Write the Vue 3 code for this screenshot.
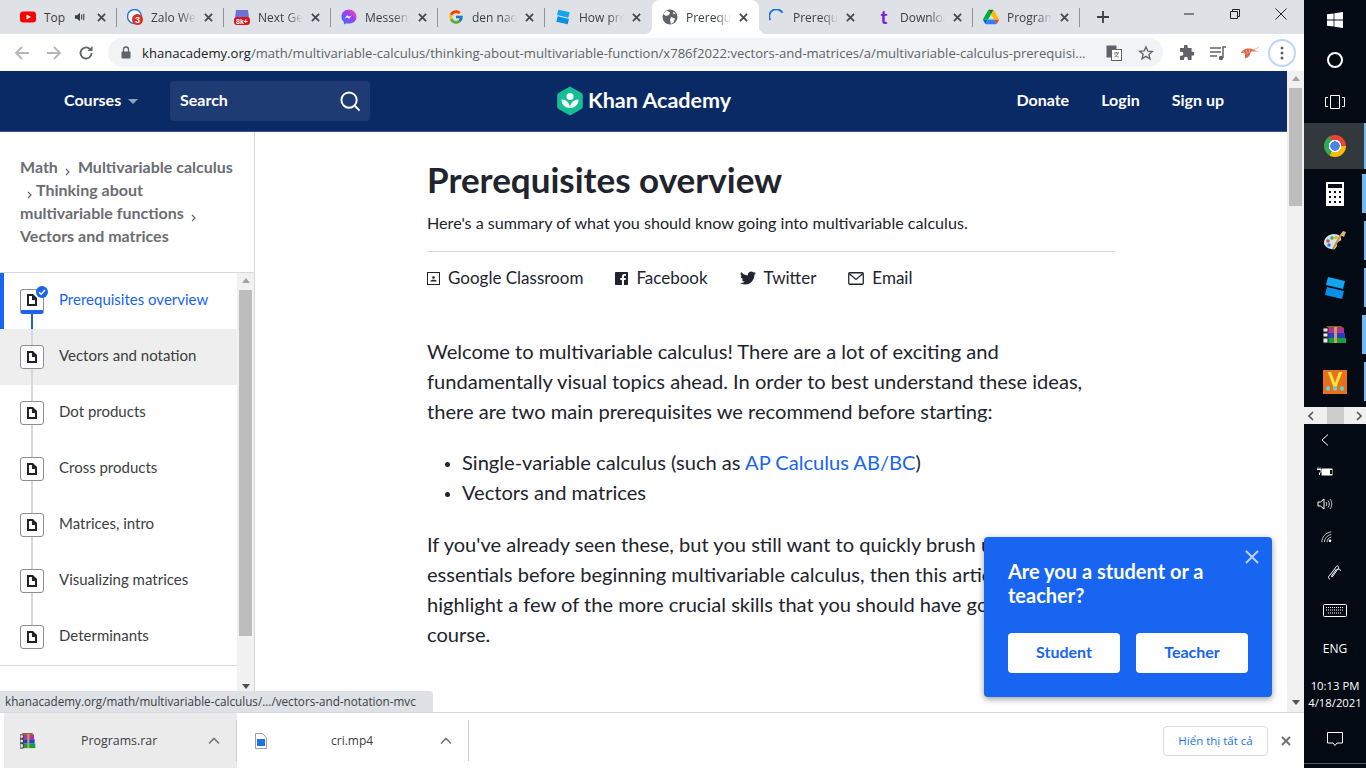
<script setup>
const tabs = [
  { icon: 'yt', title: 'Top', audio: true },
  { icon: 'zalo', title: 'Zalo Web' },
  { icon: 'next', title: 'Next Gen' },
  { icon: 'msg', title: 'Messenger' },
  { icon: 'g', title: 'den nao' },
  { icon: 'rb', title: 'How pro' },
  { icon: 'globe', title: 'Prerequisites', active: true },
  { icon: 'spin', title: 'Prerequisites' },
  { icon: 't', title: 'Download' },
  { icon: 'drive', title: 'Programs' }
]
const lessons = [
  'Prerequisites overview',
  'Vectors and notation',
  'Dot products',
  'Cross products',
  'Matrices, intro',
  'Visualizing matrices',
  'Determinants'
]
const apps = [
  { k: 'chrome', active: true },
  { k: 'calc', wide: true },
  { k: 'paint' },
  { k: 'rb' },
  { k: 'rar', wide: true },
  { k: 'v' }
]
</script>

<template>
  <div class="screen">
    <svg class="defs" width="0" height="0">
      <defs>
        <symbol id="rar" viewBox="0 0 24 18" preserveAspectRatio="none">
          <path d="M3 0h15l3 2H5z" fill="#8a5a2b" />
          <rect x="3" y="2" width="18" height="5" fill="#b5309a" />
          <rect x="3" y="7" width="19" height="5" fill="#2440c8" />
          <rect x="3" y="12" width="20" height="5" fill="#14a03c" />
          <path d="M0 2h5v4H0zM0 7h5v4H0zM0 12h5v5H0z" fill="#e8e8e8" stroke="#222" />
          <rect x="11" y="1" width="3" height="16" fill="#c9a15a" />
        </symbol>
        <symbol id="x" viewBox="0 0 10 10">
          <path d="M1 1l8 8M9 1L1 9" fill="none" stroke="currentColor" stroke-width="2" />
        </symbol>
        <symbol id="roblox" viewBox="0 0 24 24">
          <path d="M5 1l17 4-2 8-17-4z" fill="#12a5f0" />
          <path d="M4 11l17 4-2 8-17-4z" fill="#0a8ee6" />
        </symbol>
      </defs>
    </svg>

    <div class="desktop">
      <div class="chrome">
        <div class="tabstrip">
          <div v-for="t in tabs" :key="t.icon" class="tab" :class="{ active: t.active }">
            <svg v-if="t.icon === 'yt'" class="fav" viewBox="0 0 16 16">
              <rect x="0" y="2.500" width="16" height="11" rx="3" fill="#f00" />
              <path d="M6.500 5.500v5L11 8z" fill="#fff" />
            </svg>
            <svg v-else-if="t.icon === 'zalo'" class="fav" viewBox="0 0 16 16">
              <circle cx="7.500" cy="7.500" r="7" fill="#fff" stroke="#2f6fd8" stroke-width="1.400" />
              <circle cx="10.500" cy="10.500" r="5.500" fill="#d93025" />
              <text x="10.500" y="14" class="badge-num" text-anchor="middle">3</text>
            </svg>
            <svg v-else-if="t.icon === 'next'" class="fav" viewBox="0 0 16 16">
              <path d="M2 1h12l1 8H1z" fill="#6a72d8" />
              <rect x="0" y="8" width="16" height="8" rx="3" fill="#d9141a" />
              <text x="8" y="14.600" class="badge-txt" text-anchor="middle">8k+</text>
            </svg>
            <svg v-else-if="t.icon === 'msg'" class="fav" viewBox="0 0 16 16">
              <defs>
                <linearGradient id="mg" x1="0" y1="1" x2="1" y2="0">
                  <stop offset="0" stop-color="#2a7bff" />
                  <stop offset=".6" stop-color="#a13cf0" />
                  <stop offset="1" stop-color="#ff6a88" />
                </linearGradient>
              </defs>
              <path d="M8 .5C3.700.5.500 3.600.500 7.700c0 2.200.9 4 2.400 5.300V15.500l2.400-1.300c.8.300 1.700.4 2.700.4 4.300 0 7.500-3 7.500-6.900S12.300.5 8 .5z" fill="url(#mg)" />
              <path d="M3.500 9.800l2.700-3.600 2 1.600 2.600-1.600-2.700 3.600-2-1.600z" fill="#fff" />
            </svg>
            <svg v-else-if="t.icon === 'g'" class="fav" viewBox="0 0 48 48">
              <path fill="#FFC107" d="M43.611 20.083H42V20H24v8h11.303c-1.649 4.657-6.080 8-11.303 8-6.627 0-12-5.373-12-12s5.373-12 12-12c3.059 0 5.842 1.154 7.961 3.039l5.657-5.657C34.046 6.053 29.268 4 24 4 12.955 4 4 12.955 4 24s8.955 20 20 20 20-8.955 20-20c0-1.341-.138-2.650-.389-3.917z" />
              <path fill="#FF3D00" d="M6.306 14.691l6.571 4.819C14.655 15.108 18.961 12 24 12c3.059 0 5.842 1.154 7.961 3.039l5.657-5.657C34.046 6.053 29.268 4 24 4 16.318 4 9.656 8.337 6.306 14.691z" />
              <path fill="#4CAF50" d="M24 44c5.166 0 9.860-1.977 13.409-5.192l-6.190-5.238A11.910 11.910 0 0124 36c-5.202 0-9.619-3.317-11.283-7.946l-6.522 5.025C9.505 39.556 16.227 44 24 44z" />
              <path fill="#1976D2" d="M43.611 20.083H42V20H24v8h11.303a12.040 12.040 0 01-4.087 5.571l6.190 5.238C36.971 39.205 44 34 44 24c0-1.341-.138-2.650-.389-3.917z" />
            </svg>
            <svg v-else-if="t.icon === 'rb'" class="fav"><use href="#roblox" /></svg>
            <svg v-else-if="t.icon === 'globe'" class="fav" viewBox="0 0 16 16">
              <circle cx="8" cy="8" r="7.500" fill="#5f6368" />
              <path d="M5 1.500l3 2-1 2.500-3 1-3-2zM9 8l4 1.500-1.500 4-2.500 1.500-1-4zM11 2.500l2.500 2-2 1z" fill="#fff" />
            </svg>
            <svg v-else-if="t.icon === 'spin'" class="fav" viewBox="0 0 16 16">
              <path d="M1.200 11A7 7 0 0 1 13.500 3.800" fill="none" stroke="#1a73e8" stroke-width="2" />
            </svg>
            <span v-else-if="t.icon === 't'" class="fav fav-t">t</span>
            <svg v-else-if="t.icon === 'drive'" class="fav" viewBox="0 0 87.300 78">
              <path d="M6.600 66.850l3.850 6.650c.8 1.400 1.950 2.500 3.300 3.300l13.750-23.800H0c0 1.550.4 3.100 1.200 4.500z" fill="#0066da" />
              <path d="M43.650 25L29.900 1.200c-1.350.8-2.500 1.900-3.300 3.300L1.200 48.500A9.060 9.060 0 000 53h27.500z" fill="#00ac47" />
              <path d="M73.550 76.800c1.350-.8 2.500-1.900 3.300-3.300l1.600-2.750L86.100 57.500c.8-1.400 1.200-2.950 1.200-4.500H59.800l5.850 11.500z" fill="#ea4335" />
              <path d="M43.650 25L57.400 1.200C56.050.4 54.500 0 52.900 0H34.400c-1.600 0-3.150.45-4.500 1.200z" fill="#00832d" />
              <path d="M59.800 53H27.500L13.750 76.800c1.350.8 2.900 1.200 4.500 1.200h50.800c1.600 0 3.150-.45 4.500-1.200z" fill="#2684fc" />
              <path d="M73.400 26.500L60.700 4.500c-.8-1.400-1.950-2.500-3.300-3.300L43.650 25 59.800 53h27.450c0-1.550-.4-3.100-1.200-4.500z" fill="#ffba00" />
            </svg>
            <span class="tab-title" :class="{ short: t.audio }">{{ t.title }}</span>
            <svg v-if="t.audio" class="audio" viewBox="0 0 12 12">
              <path d="M0 4h2.500L6 1v10L2.500 8H0z" fill="#3c4043" />
              <path d="M8 3v6M10.500 2v8" stroke="#3c4043" stroke-width="1.300" fill="none" />
            </svg>
            <svg class="tab-x"><use href="#x" /></svg>
          </div>
          <svg class="newtab" viewBox="0 0 12 12"><path d="M6 0v12M0 6h12" stroke="#3c4043" stroke-width="1.800" /></svg>
          <div class="winctl">
            <svg viewBox="0 0 12 12"><path d="M1 6h10" stroke="#222" stroke-width="1" /></svg>
            <svg viewBox="0 0 12 12"><path d="M1.500 3.500h7v7h-7zM3.500 3.500v-2h7v7h-2" fill="none" stroke="#222" stroke-width="1" /></svg>
            <svg viewBox="0 0 12 12"><path d="M.5.500l11 11M11.500.500l-11 11" stroke="#222" stroke-width="1" /></svg>
          </div>
        </div>

        <div class="toolbar">
          <svg class="nav-ic" viewBox="0 0 16 16"><path d="M15 8H2M8 2L2 8l6 6" fill="none" stroke="#b4b6b9" stroke-width="1.800" /></svg>
          <svg class="nav-ic" viewBox="0 0 16 16"><path d="M1 8h13M8 2l6 6-6 6" fill="none" stroke="#b4b6b9" stroke-width="1.800" /></svg>
          <svg class="nav-ic" viewBox="0 0 16 16"><path d="M13.500 8A5.500 5.500 0 1 1 11.800 4" fill="none" stroke="#5f6368" stroke-width="1.800" /><path d="M14.500 1v5h-5z" fill="#5f6368" /></svg>
          <div class="omni">
            <svg class="lock" viewBox="0 0 10 13"><path d="M2.500 6V3.500a2.500 2.500 0 0 1 5 0V6" fill="none" stroke="#5f6368" stroke-width="1.300" /><rect x="0.500" y="5.500" width="9" height="7" rx="1" fill="#5f6368" /></svg>
            <span class="url"><b>khanacademy.org</b>/math/multivariable-calculus/thinking-about-multivariable-function/x786f2022:vectors-and-matrices/a/multivariable-calculus-prerequisi...</span>
            <svg class="omni-ic" viewBox="0 0 16 16">
              <rect x="0.500" y="0.500" width="10" height="12" fill="#5f6368" />
              <rect x="5.500" y="4.500" width="10" height="11" fill="#fff" stroke="#5f6368" />
              <path d="M8 8h5M10.500 7v1M12 8c-.5 2-2 3.500-3.500 4M9 9.500c.8 1.300 2 2.200 3.500 2.500" fill="none" stroke="#5f6368" stroke-width=".9" />
            </svg>
            <svg class="omni-ic star" viewBox="0 0 24 24"><path d="M12 3l2.700 6.300 6.800.6-5.200 4.500 1.600 6.700L12 17l-5.900 3.600 1.600-6.700-5.200-4.500 6.800-.6z" fill="none" stroke="#5f6368" stroke-width="2" /></svg>
          </div>
          <svg class="ext puzzle" viewBox="0 0 16 16"><path d="M6 1.500a1.800 1.800 0 0 1 3.600 0V3h4v3.800H15a1.900 1.900 0 0 1 0 3.800h-1.400V15H9.800v-1.400a1.900 1.900 0 0 0-3.800 0V15H2v-4.200h1.400a2 2 0 0 0 0-4H2V3h4z" fill="#5f6368" /></svg>
          <svg class="ext list" viewBox="0 0 16 16"><path d="M0 3h11M0 7h11M0 11h7" stroke="#5f6368" stroke-width="1.500" /><path d="M13 13V2h3" fill="none" stroke="#5f6368" stroke-width="1.500" /><circle cx="11" cy="13" r="2.200" fill="#5f6368" /></svg>
          <svg class="ext shrimp" viewBox="0 0 20 14"><path d="M1 7c1-3 5-5 9-4.500 3 .4 5 1.500 7 3-3-.6-5-.4-6.500.5 0 3-2 5.500-5 6.500-1-2-1-3.500 0-5-2-.5-3.500-.5-4.500-.5z" fill="#d9694a" /><path d="M3 5l2 3M6 4l1.500 3.500M9 3.500L10 7" stroke="#f2b8a0" stroke-width=".8" /><path d="M12 4l7-2.500M13 5l6 .5" stroke="#eeb49a" stroke-width=".8" fill="none" /></svg>
          <div class="menu-btn"><svg viewBox="0 0 4 16"><circle cx="2" cy="3" r="1.500" fill="#5f6368" /><circle cx="2" cy="8" r="1.500" fill="#5f6368" /><circle cx="2" cy="13" r="1.500" fill="#5f6368" /></svg></div>
        </div>

        <div class="viewport">
          <div class="site">
            <header class="kh">
              <div class="kh-left">
                <span class="kh-courses">Courses</span>
                <i class="caret"></i>
                <div class="search">
                  <span>Search</span>
                  <svg viewBox="0 0 22 22"><circle cx="9.500" cy="9.500" r="8" fill="none" stroke="#fff" stroke-width="2" /><path d="M15.500 15.500l5 5" stroke="#fff" stroke-width="2" /></svg>
                </div>
              </div>
              <div class="logo">
                <svg viewBox="0 0 28 30">
                  <path d="M14 .5l11.500 6.600a2.500 2.500 0 0 1 1.300 2.200v11.400a2.500 2.500 0 0 1-1.300 2.200L14 29.500 2.500 22.900a2.500 2.500 0 0 1-1.300-2.200V9.300a2.500 2.500 0 0 1 1.300-2.200z" fill="#14bf96" />
                  <circle cx="14" cy="10.500" r="3.500" fill="#fff" />
                  <path d="M5.500 13.500c4.500 0 8 3 8.500 8.500-4.500 0-8.500-3-8.500-8.500zM22.500 13.500c-4.500 0-8 3-8.500 8.500 4.500 0 8.500-3 8.500-8.500z" fill="#fff" />
                </svg>
                <span>Khan Academy</span>
              </div>
              <nav class="kh-right">
                <span>Donate</span>
                <span>Login</span>
                <span>Sign up</span>
              </nav>
            </header>

            <div class="body">
              <aside class="side">
                <div class="crumbs">
                  Math<svg class="chev wide" viewBox="0 0 5 8"><path d="M1 1l3 3-3 3" fill="none" stroke="#626569" stroke-width="1.200" /></svg>Multivariable calculus
                  <svg class="chev" viewBox="0 0 5 8"><path d="M1 1l3 3-3 3" fill="none" stroke="#626569" stroke-width="1.200" /></svg>Thinking about multivariable functions<svg class="chev" viewBox="0 0 5 8"><path d="M1 1l3 3-3 3" fill="none" stroke="#626569" stroke-width="1.200" /></svg>Vectors and matrices
                </div>
                <div class="side-scroll">
                  <div class="side-list">
                    <ul class="lessons">
                      <li v-for="(l, i) in lessons" :key="l" class="lesson" :class="{ current: i === 0, hover: i === 1, last: i === lessons.length - 1 }">
                        <span class="doc">
                          <svg viewBox="0 0 10 12"><path d="M0 0h6l4 4v8H0z" fill="#21242c" /><path d="M2 2h3v4h3v4H2z" fill="#fff" /></svg>
                        </span>
                        <svg v-if="i === 0" class="check" viewBox="0 0 12 12"><circle cx="6" cy="6" r="6" fill="#1865f2" /><path d="M3 6.200l2.200 2L9 4" fill="none" stroke="#fff" stroke-width="1.500" /></svg>
                        <span class="lesson-name">{{ l }}</span>
                      </li>
                    </ul>
                  </div>
                  <div class="sb sb-side">
                    <i class="arr up"></i>
                    <div class="thumb"></div>
                    <i class="arr down"></i>
                  </div>
                </div>
              </aside>

              <main class="article">
                <div class="col">
                  <h1>Prerequisites overview</h1>
                  <p class="sub">Here's a summary of what you should know going into multivariable calculus.</p>
                  <div class="share">
                    <span class="sh"><svg viewBox="0 0 13 13"><rect x=".5" y=".5" width="12" height="12" fill="none" stroke="#21242c" /><circle cx="6.500" cy="5.500" r="1.300" fill="#21242c" /><path d="M3.500 9.500h6v-1l-2-.8h-2l-2 .8z" fill="#21242c" /></svg>Google Classroom</span>
                    <span class="sh"><svg viewBox="0 0 24 24"><path fill="#21242c" d="M22.675 0H1.325C.593 0 0 .593 0 1.325v21.351C0 23.407.593 24 1.325 24H12.820v-9.294H9.692v-3.622h3.128V8.413c0-3.100 1.893-4.788 4.659-4.788 1.325 0 2.463.099 2.795.143v3.240l-1.918.001c-1.504 0-1.795.715-1.795 1.763v2.313h3.587l-.467 3.622h-3.120V24h6.116c.73 0 1.323-.593 1.323-1.325V1.325C24 .593 23.407 0 22.675 0z" /></svg>Facebook</span>
                    <span class="sh"><svg class="tw" viewBox="0 0 24 24"><path fill="#21242c" d="M23.953 4.570a10 10 0 01-2.825.775 4.958 4.958 0 002.163-2.723c-.951.555-2.005.959-3.127 1.184a4.920 4.920 0 00-8.384 4.482C7.690 8.095 4.067 6.130 1.640 3.162a4.822 4.822 0 00-.666 2.475c0 1.710.87 3.213 2.188 4.096a4.904 4.904 0 01-2.228-.616v.06a4.923 4.923 0 003.946 4.827 4.996 4.996 0 01-2.212.085 4.936 4.936 0 004.604 3.417 9.867 9.867 0 01-6.102 2.105c-.39 0-.779-.023-1.170-.067a13.995 13.995 0 007.557 2.209c9.053 0 13.998-7.496 13.998-13.985 0-.21 0-.42-.015-.63A9.935 9.935 0 0024 4.590z" /></svg>Twitter</span>
                    <span class="sh"><svg class="mail" viewBox="0 0 16 13"><rect x=".75" y=".75" width="14.500" height="11.500" rx="1" fill="none" stroke="#21242c" stroke-width="1.300" /><path d="M1 1.500l7 6 7-6" fill="none" stroke="#21242c" stroke-width="1.300" /></svg>Email</span>
                  </div>
                  <p class="para first">Welcome to multivariable calculus! There are a lot of exciting and fundamentally visual topics ahead. In order to best understand these ideas, there are two main prerequisites we recommend before starting:</p>
                  <ul class="bul">
                    <li>Single-variable calculus (such as <a>AP Calculus AB/BC</a>)</li>
                    <li>Vectors and matrices</li>
                  </ul>
                  <p class="para">If you've already seen these, but you still want to quickly brush up on the essentials before beginning multivariable calculus, then this article will highlight a few of the more crucial skills that you should have going into this course.</p>
                </div>

                <div class="popup">
                  <svg class="pop-x" viewBox="0 0 14 14"><path d="M1 1l12 12M13 1L1 13" stroke="#bcd2fb" stroke-width="2" fill="none" /></svg>
                  <div class="pop-q">Are you a student or a teacher?</div>
                  <div class="pop-btns">
                    <button><span>Student</span></button>
                    <button><span>Teacher</span></button>
                  </div>
                </div>
              </main>
            </div>
          </div>
          <div class="sb sb-page">
            <i class="arr up"></i>
            <div class="thumb"></div>
            <i class="arr down"></i>
          </div>
          <div class="status">khanacademy.org/math/multivariable-calculus/.../vectors-and-notation-mvc</div>
        </div>

        <div class="downloads">
          <div class="dl dl-a">
            <svg class="dl-ic"><use href="#rar" /></svg>
            <span class="dl-name n1">Programs.rar</span>
            <svg class="dl-caret" viewBox="0 0 12 8"><path d="M1 6.500l5-5 5 5" fill="none" stroke="#777" stroke-width="1.700" /></svg>
          </div>
          <div class="dl dl-b">
            <svg class="dl-file" viewBox="0 0 12 16"><path d="M.5.500h7l4 4v11H.5z" fill="#fff" stroke="#9aa0a6" /><rect x="2" y="6" width="8" height="7" fill="#1a73e8" /></svg>
            <span class="dl-name n2">cri.mp4</span>
            <svg class="dl-caret" viewBox="0 0 12 8"><path d="M1 6.500l5-5 5 5" fill="none" stroke="#777" stroke-width="1.700" /></svg>
          </div>
          <div class="dl-right">
            <button class="showall">Hiển thị tất cả</button>
            <svg class="dl-x"><use href="#x" /></svg>
          </div>
        </div>
      </div>

      <aside class="taskbar">
        <div class="tb-sys h40">
          <svg viewBox="0 0 16 16" class="w16"><path d="M0 2.300l6.600-.9v6.200H0zM7.400 1.300L16 0v7.600H7.400zM0 8.400h6.600v6.200L0 13.700zM7.400 8.400H16V16l-8.600-1.200z" fill="#fff" /></svg>
        </div>
        <div class="tb-sys h40">
          <svg viewBox="0 0 16 16" class="w16"><circle cx="8" cy="8" r="7" fill="none" stroke="#fff" stroke-width="2" /></svg>
        </div>
        <div class="tb-sys h43">
          <svg viewBox="0 0 20 14" class="w20"><path d="M5.500.5h9v13h-9zM3 2.500H.5v9H3M17 2.500h2.500v9H17" fill="none" stroke="#fff" /></svg>
        </div>
        <div v-for="a in apps" :key="a.k" class="tb-app" :class="{ on: a.active, wide: a.wide }">
          <span v-if="a.k === 'chrome'" class="chrome-ic"></span>
          <svg v-else-if="a.k === 'calc'" class="w18h24" viewBox="0 0 18 24">
            <rect width="18" height="24" fill="#fff" />
            <rect x="2" y="2" width="14" height="4" fill="#0a0f1a" />
            <path d="M3 9h2v2H3zM8 9h2v2H8zM13 9h2v2h-2zM3 14h2v2H3zM8 14h2v2H8zM13 14h2v2h-2zM3 19h2v2H3zM8 19h2v2H8zM13 19h2v2h-2z" fill="#0a0f1a" />
          </svg>
          <svg v-else-if="a.k === 'paint'" class="w24" viewBox="0 0 24 24">
            <path d="M1 15C0 9 6 5 11 5c5 0 8 3 7 6-1 2-4 1-4 4 0 4-2 6-6 5-4-.5-6-3-7-5z" fill="#cfe3f0" />
            <circle cx="5" cy="12" r="1.800" fill="#e04a3a" /><circle cx="9" cy="9" r="1.800" fill="#42b04a" /><circle cx="13" cy="8.500" r="1.800" fill="#f0b020" /><circle cx="6" cy="16" r="1.800" fill="#3a78d8" />
            <path d="M10 20l8-14" stroke="#d88a2a" stroke-width="2" />
            <path d="M17 6l3-4 3 1-2 5z" fill="#e0b080" />
          </svg>
          <svg v-else-if="a.k === 'rb'" class="w24"><use href="#roblox" /></svg>
          <svg v-else-if="a.k === 'rar'" class="w24h18"><use href="#rar" /></svg>
          <span v-else class="v-ic"><b>V</b><i></i></span>
        </div>
        <div class="tb-scroll">
          <svg viewBox="0 0 6 10" class="sc-ar"><path d="M5 1L1 5l4 4" fill="none" stroke="#555" stroke-width="1.600" /></svg>
          <div class="sc-th"></div>
          <svg viewBox="0 0 6 10" class="sc-ar"><path d="M1 1l4 4-4 4" fill="none" stroke="#555" stroke-width="1.600" /></svg>
        </div>
        <div class="tray t32 left"><svg viewBox="0 0 8 12" class="tr8"><path d="M7 .5L1 6l6 5.500" fill="none" stroke="#fff" /></svg></div>
        <div class="tray t32 left"><svg viewBox="0 0 16 10" class="tr16"><path d="M1 .5v2M3 .5v2M0 2.500h4v2L2.500 6v2" stroke="#fff" fill="none" /><rect x="4.500" y="1.500" width="11" height="7" fill="#fff" /><rect x="13" y="3" width="2" height="4" fill="#0a0f1a" /></svg></div>
        <div class="tray t32 left"><svg viewBox="0 0 16 14" class="tr16"><path d="M1 5h2.500L7 2v10L3.500 9H1z" fill="none" stroke="#fff" /><path d="M9 5c1 1 1 3 0 4M11 3.500c1.700 2 1.700 5 0 7M13 2c2.400 3 2.400 7 0 10" fill="none" stroke="#ccc" /></svg></div>
        <div class="tray t34 left2"><svg viewBox="0 0 14 14" class="tr12"><path d="M1 13c0-6 4-11 11-12M4 13c0-4 3-8 8-9M7 13c0-3 2-5 5-6" fill="none" stroke="#e4e4e4" /><circle cx="10.500" cy="11.500" r="1.500" fill="#fff" /></svg></div>
        <div class="tray t36"><svg viewBox="0 0 16 16" class="tr16 tall"><path d="M3 15c-2 0-2-3 0-4l6-8c1-2 3-1 2.500 1L6 12c-1 1-2 1-1.500 0l5-7M11 5c2 0 3 1 2 2" fill="none" stroke="#fff" /></svg></div>
        <div class="tray t40"><svg viewBox="0 0 24 13" class="tr24"><rect x=".5" y=".5" width="23" height="12" rx="1" fill="none" stroke="#fff" /><path d="M3 3.500h18M3 6h18M5 9h14" stroke="#fff" stroke-dasharray="1 1" /></svg></div>
        <div class="tray t36 eng">ENG</div>
        <div class="clock"><span>10:13 PM</span><span>4/18/2021</span></div>
        <div class="tray notif"><svg viewBox="0 0 16 15"><path d="M.5.500h15v10.500H10L8 13.500 6 11H.5z" fill="none" stroke="#fff" /></svg></div>
        <div class="tb-line"></div>
      </aside>
    </div>
  </div>
</template>

<style>
html, body { margin: 0; overflow: hidden; }
</style>

<style scoped>
* { box-sizing: border-box; }
.defs { position: absolute; }
.screen { width: 1366px; height: 768px; overflow: hidden; font-family: "Lato", sans-serif; color: #21242c; }
.desktop { display: flex; height: 100%; }
.chrome { width: 1304px; height: 768px; display: flex; flex-direction: column; background: #fff; }

/* tabs */
.tabstrip { height: 34px; flex: none; background: #dee1e6; display: flex; align-items: flex-end; padding-left: 10px; position: relative; }
.tab { width: 107px; height: 34px; display: flex; align-items: center; padding-left: 10px; position: relative; font: 12px "Open Sans", sans-serif; color: #3c4043; }
.tab:not(.active)::after { content: ""; position: absolute; right: 0; top: 8px; height: 19px; width: 1px; background: #8f9296; }
.tab:nth-child(6)::after { display: none; }
.tab.active { background: #fff; border-radius: 8px 8px 0 0; color: #3c4043; }
.tab.active::before { content: ""; position: absolute; left: -8px; bottom: 0; width: 8px; height: 8px; background: radial-gradient(circle at 0 0, #dee1e6 8px, #fff 8.500px); }
.tab.active::after { content: ""; position: absolute; right: -8px; bottom: 0; width: 8px; height: 8px; background: radial-gradient(circle at 100% 0, #dee1e6 8px, #fff 8.500px); }
.tab:nth-child(8)::after { display: none; }
.fav { width: 16px; height: 16px; flex: none; display: block; }
.fav-t { font: 900 18px/16px "Lato", sans-serif; color: #7b1fd6; text-align: center; }
.badge-num { font: 700 9px "Liberation Sans", sans-serif; fill: #fff; }
.badge-txt { font: 700 7px "Liberation Sans", sans-serif; fill: #fff; }
.tab-title { margin-left: 8px; width: 45px; white-space: nowrap; overflow: hidden; -webkit-mask-image: linear-gradient(90deg, #000 65%, transparent); mask-image: linear-gradient(90deg, #000 65%, transparent); }
.tab-title.short { width: 22px; -webkit-mask-image: none; mask-image: none; }
.audio { width: 10px; height: 10px; position: absolute; left: 65px; top: 12px; }
.tab-x { width: 9px; height: 9px; position: absolute; left: 87px; top: 13px; color: #45494e; }
.newtab { width: 12px; height: 12px; position: absolute; left: 1097px; top: 11px; }
.winctl { position: absolute; left: 1166px; top: 0; width: 138px; display: flex; height: 30px; }
.winctl svg { width: 12px; height: 12px; margin: 8px 17px 0; }

/* toolbar */
.toolbar { height: 37px; flex: none; background: #fff; display: flex; align-items: center; padding-left: 14px; }
.nav-ic { width: 16px; height: 16px; margin-right: 16px; flex: none; }
.omni { width: 1055px; height: 29px; margin-left: -2px; border-radius: 15px; background: #f1f3f4; display: flex; align-items: center; padding-left: 13px; position: relative; }
.lock { width: 10px; height: 13px; flex: none; }
.url { margin-left: 11px; width: 950px; flex: none; white-space: nowrap; overflow: hidden; font: 13.100px "Open Sans", sans-serif; color: #5f6368; }
.url b { font-weight: 400; color: #202124; }
.omni-ic { width: 16px; height: 16px; margin-left: 14px; flex: none; }
.star { margin-left: 16px; }
.ext { width: 16px; height: 16px; flex: none; margin-left: 16px; }
.puzzle { margin-left: 15px; }
.shrimp { width: 20px; height: 14px; margin-left: 14px; }
.menu-btn { width: 28px; height: 28px; margin-left: 8px; border-radius: 50%; border: 2px solid #bdd6f7; display: flex; align-items: center; justify-content: center; flex: none; }
.menu-btn svg { width: 4px; height: 16px; }

/* page */
.viewport { flex: none; height: 641px; display: flex; position: relative; overflow: hidden; }
.site { width: 1287px; display: flex; flex-direction: column; }
.kh { height: 61px; flex: none; background: #0a2a66; color: #fff; display: flex; align-items: center; position: relative; font-weight: 700; font-size: 16px; border-bottom: 1px solid #3a5585; }
.kh-left { display: flex; align-items: center; padding-left: 64px; }
.kh-courses { width: 64px; padding-bottom: 4px; }
.caret { width: 0; height: 0; border: 5px solid transparent; border-top: 5px solid #8fa0c0; border-bottom: 0; margin-right: 32px; }
.search { width: 200px; height: 40px; border-radius: 4px; background: #1f3b74; display: flex; align-items: center; justify-content: space-between; padding: 0 9px 0 10px; }
.search span { padding-bottom: 3px; }
.search svg { width: 21px; height: 21px; }
.logo { position: absolute; left: 556px; top: 15px; display: flex; align-items: center; gap: 4px; font-size: 21.500px; }
.logo svg { width: 28px; height: 30px; }
.logo span { padding-bottom: 2px; }
.kh-right { margin-left: auto; display: flex; align-items: center; gap: 32px; padding-right: 63px; }
.kh-right span { padding-bottom: 4px; }

.body { flex: 1; display: flex; min-height: 0; }
.side { width: 255px; flex: none; border-right: 1px solid #d6d8da; display: flex; flex-direction: column; }
.crumbs { height: 141px; flex: none; padding: 23px 18px 0 20px; border-bottom: 1px solid #d6d8da; font-size: 16px; font-weight: 700; line-height: 23px; color: #6b6d72; }
.chev { width: 5px; height: 8px; margin: 0 4px 0 7px; display: inline-block; vertical-align: -3px; }
.chev.wide { margin-right: 8px; }
.side-scroll { flex: 1; display: flex; min-height: 0; }
.side-list { width: 237px; flex: none; }
.lessons { list-style: none; margin: 0; padding: 0; border-bottom: 1px solid #d6d8da; height: 393px; }
.lesson { height: 56px; display: flex; align-items: center; padding-left: 20px; position: relative; font-size: 15px; color: #3b3e40; }
.lesson::before { content: ""; position: absolute; left: 31px; top: 0; bottom: 0; width: 2px; background: #d6d8da; }
.lesson.current::before { top: 40px; background: #1865f2; }
.lesson.last::before { bottom: 28px; }
.lesson.hover { background: #eee; }
.lesson.current { color: #1865f2; box-shadow: inset 4px 0 0 #1865f2; }
.doc { width: 24px; height: 24px; border: 1px solid #8e8f92; border-radius: 3px; background: #fff; position: relative; display: flex; align-items: center; justify-content: center; flex: none; }
.doc svg { width: 10px; height: 12px; }
.current .doc { border-bottom: 4px solid #1865f2; height: 25px; margin-top: 1px; }
.check { position: absolute; left: 36px; top: 13px; width: 12px; height: 12px; }
.lesson-name { margin-left: 15px; padding-bottom: 4px; }

.sb { background: #f1f1f1; display: flex; flex-direction: column; align-items: center; position: relative; }
.arr { position: absolute; width: 0; height: 0; border: 4.500px solid transparent; }
.arr.up { top: 5px; border-bottom: 5px solid #a3a3a3; border-top: 0; }
.arr.down { bottom: 7px; border-top: 5px solid #505050; border-bottom: 0; }
.thumb { background: #bdbdbd; }
.sb-page { width: 17px; flex: none; padding-top: 17px; }
.sb-page .thumb { width: 13px; height: 118px; }
.sb-side { width: 17px; flex: none; padding-top: 17px; height: 439px; }
.sb-side .arr.down { bottom: 23px; }
.sb-side .thumb { width: 13px; height: 346px; }

.article { flex: 1; position: relative; padding-left: 172px; overflow: hidden; }
.col { width: 688px; }
h1 { font-size: 35px; line-height: 40px; font-weight: 700; margin: 0; padding-top: 27px; letter-spacing: 0; }
.sub { font-size: 16.150px; line-height: 22px; margin: 13px 0 0; padding-bottom: 17px; border-bottom: 1px solid #d6d8da; color: #21242c; }
.share { display: flex; gap: 32px; font-size: 17px; line-height: 20px; margin-top: 16px; color: #21242c; }
.sh { display: flex; align-items: center; gap: 8px; }
.sh svg { width: 13px; height: 13px; }
.sh .tw { width: 16px; height: 16px; }
.sh .mail { width: 16px; height: 13px; }
.para { font-size: 20.100px; line-height: 30px; margin: 22px 0 0; }
.para.first { margin-top: 48px; }
.bul { font-size: 20.100px; line-height: 30px; margin: 21px 0 0; padding-left: 35px; }
.bul li::marker { font-size: 15px; }
.bul a { color: #1865f2; }
.popup { position: absolute; left: 729px; top: 405px; width: 288px; height: 160px; background: #1865f2; border-radius: 4px; box-shadow: 0 2px 6px rgba(0,0,0,.4); padding: 22px 24px 0; color: #fff; }
.pop-x { position: absolute; right: 13px; top: 13px; width: 14px; height: 14px; }
.pop-q { font-size: 20px; line-height: 24px; font-weight: 700; width: 215px; }
.pop-btns { display: flex; gap: 16px; margin-top: 26px; }
.pop-btns button { width: 112px; height: 40px; border: 0; border-radius: 4px; background: #fff; color: #1865f2; font: 700 16px "Lato", sans-serif; padding: 0; }
.pop-btns span { display: block; padding-bottom: 4px; }

.status { position: absolute; left: 0; bottom: 0; height: 21px; width: 433px; background: #dee1e6; border-radius: 0 4px 0 0; font: 11.700px/21px "Open Sans", sans-serif; color: #3c4043; padding-left: 5px; white-space: nowrap; }

/* downloads */
.downloads { flex: 1; border-top: 1px solid #d6d8da; display: flex; align-items: stretch; background: #fff; font: 12px "Open Sans", sans-serif; color: #3c4043; position: relative; padding-left: 4px; }
.dl { display: flex; align-items: center; position: relative; height: 55px; }
.dl-a { width: 233px; background: #ebebeb; padding-left: 16px; }
.dl-b { width: 232px; padding-left: 16px; }
.dl::after { content: ""; position: absolute; right: 0; top: 7px; bottom: 7px; width: 1px; background: #c8cacc; }
.dl-ic { width: 16px; height: 16px; flex: none; }
.dl-file { width: 12px; height: 16px; flex: none; margin-left: 2px; }
.dl-name { position: absolute; top: 19px; }
.n1 { left: 77px; font-size: 12.400px; }
.n2 { left: 94px; }
.dl-caret { width: 12px; height: 8px; position: absolute; right: 17px; top: 24px; }
.dl-right { margin-left: auto; display: flex; align-items: center; }
.showall { width: 105px; height: 30px; border: 1px solid #dadce0; border-radius: 4px; background: #fff; color: #1a73e8; font: 11.500px "Open Sans", sans-serif; padding: 0; }
.dl-x { width: 10px; height: 10px; color: #6f7174; margin: 0 13px 0 13px; }

/* taskbar */
.taskbar { width: 62px; flex: none; height: 768px; background: #030a14; color: #fff; display: flex; flex-direction: column; font: 12px "Open Sans", sans-serif; position: relative; }
.tb-sys { display: flex; align-items: center; justify-content: center; }
.h40 { height: 40px; } .h43 { height: 43px; }
.w16 { width: 16px; height: 16px; } .w20 { width: 20px; height: 14px; } .w24 { width: 24px; height: 24px; } .w18h24 { width: 18px; height: 24px; } .w24h18 { width: 24px; height: 18px; }
.tb-app { height: 47px; display: flex; align-items: center; justify-content: center; position: relative; }
.tb-app.on { background: #33383d; height: 46px; margin-bottom: 1px; }
.tb-app::after { content: ""; position: absolute; right: 0; top: 4px; bottom: 4px; width: 2px; background: #76b9ed; }
.tb-app.on::after { top: 0; bottom: 0; }
.tb-app.wide::after { width: 4px; }
.chrome-ic { width: 22px; height: 22px; border-radius: 50%; background: radial-gradient(circle, #4a86e8 0 4.500px, #fff 5px 6px, transparent 6.500px), conic-gradient(from -30deg, #ea4335 0 120deg, #fbbc04 120deg 240deg, #34a853 240deg 360deg); }
.v-ic { width: 24px; height: 24px; background: #e8701a; position: relative; display: block; text-align: center; font: 900 20px/18px "Lato", sans-serif; color: #ffe640; overflow: hidden; }
.v-ic b { font-weight: 900; }
.v-ic i { position: absolute; left: 2px; right: 2px; bottom: 3px; height: 5px; background: radial-gradient(circle at 3px 2.500px, #6cc 2px, transparent 2.500px) 0 0/7px 5px repeat-x; }
.tb-scroll { height: 17px; margin-top: 2px; background: #f0f0f0; display: flex; align-items: center; justify-content: space-between; padding: 0 4px; }
.sc-ar { width: 6px; height: 10px; }
.sc-th { width: 17px; height: 17px; background: #cdcdcd; }
.tray { display: flex; align-items: center; justify-content: center; flex: none; }
.tray.left { padding-right: 20px; }
.tray.left2 { padding-right: 17px; }
.t32 { height: 32px; } .t34 { height: 34px; } .t36 { height: 36px; } .t40 { height: 40px; }
.tr8 { width: 8px; height: 12px; } .tr16 { width: 16px; height: 14px; } .tr12 { width: 12px; height: 12px; } .tr24 { width: 24px; height: 13px; }
.tall { height: 16px; }
.eng { font-size: 12px; }
.clock { margin-top: 11px; height: 35px; display: flex; flex-direction: column; align-items: center; font-size: 11.300px; line-height: 17px; white-space: nowrap; }
.notif { height: 36px; margin-top: 9px; }
.notif svg { width: 16px; height: 15px; }
.tb-line { height: 1px; margin-top: 6px; background: #555a60; flex: none; }
</style>
